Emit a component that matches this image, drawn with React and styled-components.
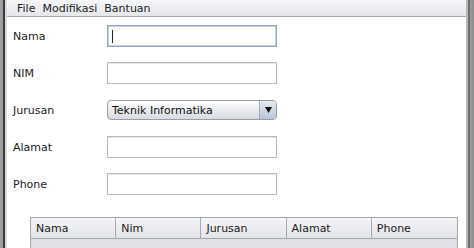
import React from "react";
import styled, { createGlobalStyle } from "styled-components";

const GlobalStyle = createGlobalStyle`
  html, body {
    margin: 0;
    padding: 0;
    width: 474px;
    height: 248px;
    overflow: hidden;
    background: #ffffff;
  }
  * { box-sizing: border-box; }
`;

// Window frame
const Frame = styled.div`
  display: flex;
  width: 474px;
  height: 248px;
  font-family: "DejaVu Sans", "Liberation Sans", sans-serif;
  font-size: 11px;
  color: #222;
`;

const EdgeLeft = styled.div`
  width: 7px;
  flex: none;
  background: linear-gradient(
    to right,
    #a2a2a2 0px,
    #9a9a9a 3px,
    #3c3c3c 3px,
    #3c3c3c 5px,
    #cfcfcf 5px,
    #e6e6e6 7px
  );
`;

const EdgeRight = styled.div`
  width: 8px;
  flex: none;
  background: linear-gradient(
    to right,
    #b8b8b8 0px,
    #b8b8b8 2px,
    #6e6e6e 2px,
    #6e6e6e 4px,
    #9d9d9d 4px,
    #8a8a8a 8px
  );
`;

const Main = styled.div`
  flex: 1;
  display: flex;
  flex-direction: column;
  background: #ffffff;
`;

const MenuBar = styled.div`
  height: 17px;
  display: flex;
  align-items: center;
  gap: 7px;
  padding-left: 10px;
  background: linear-gradient(to bottom, #f6f7f9, #e4e6ea);
  border-bottom: 1px solid #a8abb0;
  flex: none;
`;

const MenuItem = styled.span`
  color: #1a1a1a;
  font-size: 11px;
`;

const Form = styled.div`
  display: grid;
  grid-template-columns: 94px 170px;
  grid-auto-rows: 22px;
  row-gap: 15px;
  align-items: center;
  padding: 8px 0 0 6px;
`;

const Label = styled.label`
  font-size: 11px;
  color: #1a1a1a;
`;

const Field = styled.div`
  height: 22px;
  border: 1px solid ${p => (p.focused ? "#8ea4c6" : "#b9b9b9")};
  box-shadow: ${p =>
    p.focused ? "inset 0 0 0 1px #c5d3e8" : "inset 0 1px 0 #e8e8e8"};
  background: #fff;
  display: flex;
  align-items: center;
  padding-left: 4px;
`;

const Caret = styled.span`
  width: 1px;
  height: 13px;
  background: #222;
`;

const Combo = styled.div`
  height: 20px;
  border: 1px solid #9a9da3;
  border-radius: 4px;
  background: linear-gradient(to bottom, #ffffff, #e6e8ec 60%, #d8dbe1);
  display: flex;
  align-items: center;
  justify-content: space-between;
  overflow: hidden;
`;

const ComboText = styled.span`
  padding-left: 4px;
  font-size: 11px;
  color: #111;
`;

const ComboButton = styled.div`
  width: 17px;
  height: 100%;
  border-left: 1px solid #a4aab4;
  background: linear-gradient(to bottom, #e4eaf3, #b9c6d8);
  display: flex;
  align-items: center;
  justify-content: center;
`;

// Table
const Table = styled.div`
  margin: 22px 8px 0 23px;
  border: 1px solid #a4a7ad;
  border-bottom: none;
  flex: 1;
  display: flex;
  flex-direction: column;
  background: #dfe1e6;
`;

const HeaderRow = styled.div`
  display: grid;
  grid-template-columns: repeat(5, 1fr);
  height: 21px;
  background: linear-gradient(to bottom, #f4f5f7, #e2e4e8);
  border-bottom: 1px solid #a4a7ad;
`;

const HeaderCell = styled.div`
  display: flex;
  align-items: center;
  padding-left: 5px;
  font-size: 11px;
  color: #1a1a1a;
  border-right: 1px solid #a4a7ad;
  &:last-child { border-right: none; }
`;

const columns = ["Nama", "Nim", "Jurusan", "Alamat", "Phone"];

export default function App() {
  return (
    <>
      <GlobalStyle />
      <Frame>
        <EdgeLeft />
        <Main>
          <MenuBar>
            <MenuItem>File</MenuItem>
            <MenuItem>Modifikasi</MenuItem>
            <MenuItem>Bantuan</MenuItem>
          </MenuBar>
          <Form>
            <Label>Nama</Label>
            <Field focused>
              <Caret />
            </Field>
            <Label>NIM</Label>
            <Field />
            <Label>Jurusan</Label>
            <Combo>
              <ComboText>Teknik Informatika</ComboText>
              <ComboButton>
                <svg width="7" height="6" viewBox="0 0 7 6">
                  <path d="M0 0 H7 L3.5 6 Z" fill="#111" />
                </svg>
              </ComboButton>
            </Combo>
            <Label>Alamat</Label>
            <Field />
            <Label>Phone</Label>
            <Field />
          </Form>
          <Table>
            <HeaderRow>
              {columns.map(c => (
                <HeaderCell key={c}>{c}</HeaderCell>
              ))}
            </HeaderRow>
          </Table>
        </Main>
        <EdgeRight />
      </Frame>
    </>
  );
}
